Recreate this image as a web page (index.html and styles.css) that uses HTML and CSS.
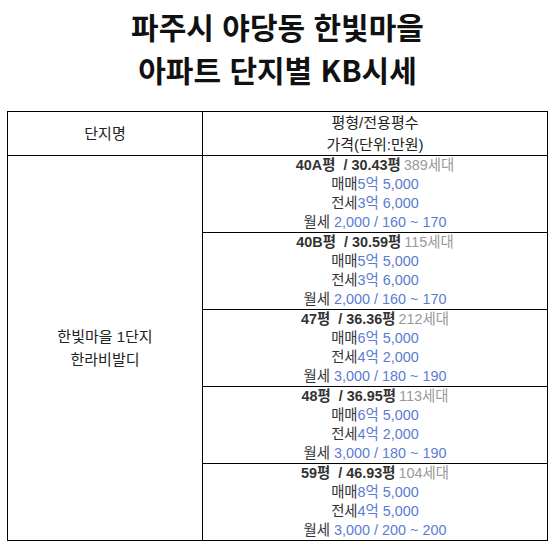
FILE: index.html
```html
<!DOCTYPE html>
<html lang="ko">
<head>
<meta charset="utf-8">
<title>파주시 야당동 한빛마을 아파트 단지별 KB시세</title>
<link rel="stylesheet" href="styles.css">
</head>
<body>
<h1 class="title">파주시 야당동 한빛마을<br>아파트 단지별 KB시세</h1>
<table class="price-table">
  <thead>
    <tr>
      <th class="col-name">단지명</th>
      <th class="col-info">평형/전용평수<br>가격(단위:만원)</th>
    </tr>
  </thead>
  <tbody>
    <tr>
      <td class="complex" rowspan="5">한빛마을 1단지<br>한라비발디</td>
      <td class="unit">
        <div><b>40A평 &nbsp;/ 30.43평</b><span class="hh">389세대</span></div>
        <div>매매<span class="v">5억 5,000</span></div>
        <div>전세<span class="v">3억 6,000</span></div>
        <div>월세 <span class="v">2,000 / 160 ~ 170</span></div>
      </td>
    </tr>
    <tr>
      <td class="unit">
        <div><b>40B평 &nbsp;/ 30.59평</b><span class="hh">115세대</span></div>
        <div>매매<span class="v">5억 5,000</span></div>
        <div>전세<span class="v">3억 6,000</span></div>
        <div>월세 <span class="v">2,000 / 160 ~ 170</span></div>
      </td>
    </tr>
    <tr>
      <td class="unit">
        <div><b>47평 &nbsp;/ 36.36평</b><span class="hh">212세대</span></div>
        <div>매매<span class="v">6억 5,000</span></div>
        <div>전세<span class="v">4억 2,000</span></div>
        <div>월세 <span class="v">3,000 / 180 ~ 190</span></div>
      </td>
    </tr>
    <tr>
      <td class="unit">
        <div><b>48평 &nbsp;/ 36.95평</b><span class="hh">113세대</span></div>
        <div>매매<span class="v">6억 5,000</span></div>
        <div>전세<span class="v">4억 2,000</span></div>
        <div>월세 <span class="v">3,000 / 180 ~ 190</span></div>
      </td>
    </tr>
    <tr>
      <td class="unit">
        <div><b>59평 &nbsp;/ 46.93평</b><span class="hh">104세대</span></div>
        <div>매매<span class="v">8억 5,000</span></div>
        <div>전세<span class="v">4억 5,000</span></div>
        <div>월세 <span class="v">3,000 / 200 ~ 200</span></div>
      </td>
    </tr>
  </tbody>
</table>
</body>
</html>
```

FILE: styles.css
```css
html, body {
  margin: 0;
  padding: 0;
  background: #ffffff;
}
body {
  padding: 5px 6px 0 7px;
  font-family: "Liberation Sans", "Noto Sans CJK KR", sans-serif;
  color: #222222;
}
.title {
  margin: 0;
  text-align: center;
  font-family: "Noto Sans CJK KR", sans-serif;
  font-weight: 700;
  font-size: 30px;
  line-height: 43px;
  color: #111111;
}
.price-table {
  margin-top: 20px;
  width: 541px;
  border-collapse: collapse;
  table-layout: fixed;
}
.price-table th,
.price-table td {
  border: 1px solid #000000;
  padding: 0;
  text-align: center;
  font-weight: 400;
}
.col-name {
  width: 194px;
  font-size: 15px;
  line-height: 21.5px;
  height: 43px;
}
.col-info {
  font-size: 15px;
  line-height: 21.5px;
  height: 43px;
}
.complex {
  font-size: 15px;
  line-height: 23px;
  vertical-align: middle;
  padding-bottom: 2px;
}
.unit {
  font-size: 14.4px;
  line-height: 19px;
  color: #333333;
  height: 76px;
  vertical-align: top;
}
.unit b {
  font-weight: 700;
  color: #333333;
  margin-right: 3px;
}
.hh {
  color: #999999;
}
.v {
  color: #5b7bd5;
}
```
